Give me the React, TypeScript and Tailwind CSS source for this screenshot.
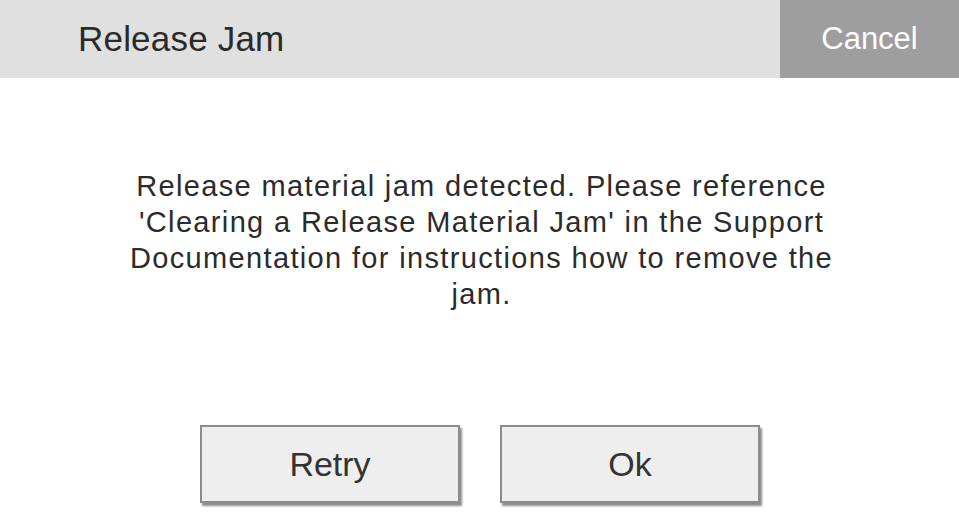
export default function App() {
  return (
    <div
      className="flex h-[522px] w-[959px] flex-col bg-white text-[#2b2b2b]"
      style={{ fontFamily: '"Liberation Sans", Arial, sans-serif' }}
    >
      <div className="flex h-[78px] items-stretch bg-[#e0e0e0]">
        <div className="flex flex-1 items-center pl-[78px] text-[35px] tracking-[0.2px] text-[#2a2a2a]">
          Release Jam
        </div>
        <button className="flex w-[179px] items-center justify-center bg-[#9e9e9e] text-[31px] text-white">
          Cancel
        </button>
      </div>

      <div className="flex flex-1 flex-col items-center">
        <p className="mt-[90px] ml-[4px] w-[724px] text-center text-[29px] leading-[36px] tracking-[1.35px] text-[#2b2b2b]">
          Release material jam detected. Please reference 'Clearing a Release
          Material Jam' in the Support Documentation for instructions how to
          remove the jam.
        </p>

        <div className="mt-auto mb-[19px] flex gap-[40px] pl-[1px]">
          <button className="flex h-[78px] w-[260px] items-center justify-center border-2 border-[#8c8c8c] bg-[#eeeeee] text-[34px] text-[#333] shadow-[2px_3px_2px_rgba(0,0,0,0.45)]">
            Retry
          </button>
          <button className="flex h-[78px] w-[260px] items-center justify-center border-2 border-[#8c8c8c] bg-[#eeeeee] text-[34px] text-[#333] shadow-[2px_3px_2px_rgba(0,0,0,0.45)]">
            Ok
          </button>
        </div>
      </div>
    </div>
  );
}
